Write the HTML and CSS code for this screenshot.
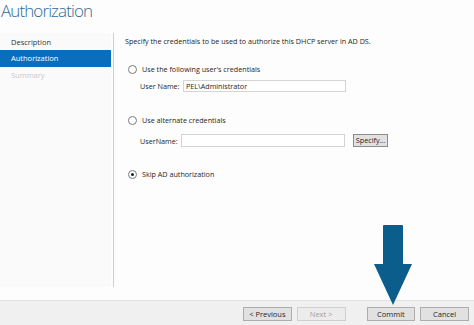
FILE: index.html
```html
<!DOCTYPE html>
<html>
<head>
<meta charset="utf-8">
<link rel="stylesheet" href="styles.css">
</head>
<body>
<div class="window">
  <header class="title">Authorization</header>
  <div class="body">
    <nav class="nav">
      <div class="nav-item">Description</div>
      <div class="nav-item selected">Authorization</div>
      <div class="nav-item disabled">Summary</div>
    </nav>
    <div class="sep"></div>
    <main class="content">
      <p class="intro">Specify the credentials to be used to authorize this DHCP server in AD DS.</p>
      <div class="option opt1">
        <span class="radio"></span><span>Use the following user's credentials</span>
      </div>
      <div class="field f1">
        <span class="flabel">User Name:</span><span class="input">PEL\Administrator</span>
      </div>
      <div class="option opt2">
        <span class="radio"></span><span>Use alternate credentials</span>
      </div>
      <div class="field f2">
        <span class="flabel">UserName:</span><span class="input"></span><span class="specify">Specify...</span>
      </div>
      <div class="option opt3">
        <span class="radio checked"></span><span>Skip AD authorization</span>
      </div>
    </main>
  </div>
  <footer class="footer">
    <span class="btn">&lt; Previous</span>
    <span class="btn disabled">Next &gt;</span>
    <span class="btn commit">Commit</span>
    <span class="btn">Cancel</span>
  </footer>
  <svg class="arrow" width="40" height="82" viewBox="0 0 40 82">
    <path d="M10 1 Q10 0 11 0 L29 0 Q30 0 30 1 L30 39 L39 39 L20 80 L1 39 L10 39 Z" fill="#0b5d8b"/>
  </svg>
</div>
</body>
</html>
```
FILE: styles.css
```css
html, body {
  margin: 0;
  padding: 0;
  background: #fdfdfd;
}
.window {
  position: relative;
  width: 474px;
  height: 325px;
  overflow: hidden;
  font-family: "Open Sans", "Noto Sans", sans-serif;
  font-size: 7.5px;
  color: #1e1e1e;
  display: flex;
  flex-direction: column;
}
.title {
  height: 32px;
  padding-top: 1px;
  padding-left: 1px;
  font-size: 17px;
  font-weight: 300;
  line-height: 20px;
  color: #2f6b98;
  letter-spacing: -0.9px;
}
.body {
  display: flex;
  height: 254px;
}
.nav {
  width: 111px;
  padding-top: 1px;
  background: #fafafa;
}
.nav-item {
  height: 16px;
  line-height: 16px;
  padding-left: 11px;
  color: #333;
}
.nav-item.selected {
  height: 17px;
  line-height: 17px;
  background: #0a6ebd;
  color: #fff;
}
.nav-item.disabled {
  color: #c8c8c8;
}
.sep {
  width: 1px;
  margin-left: 2px;
  background: #cfcfcf;
}
.content {
  flex: 1;
  padding-left: 11px;
  position: relative;
  font-size: 7.2px;
}
.intro {
  margin: 3px 0 0 0;
  line-height: 10px;
}
.option {
  display: flex;
  align-items: center;
  padding-left: 3px;
  height: 10px;
}
.opt1 { margin-top: 18px; }
.opt2 { margin-top: 23px; }
.opt3 { margin-top: 22px; }
.radio {
  width: 7px;
  height: 7px;
  border: 1px solid #7a7a7a;
  border-radius: 50%;
  background: #fff;
  margin-right: 5px;
  box-sizing: content-box;
  position: relative;
}
.radio.checked::after {
  content: "";
  position: absolute;
  left: 2px;
  top: 2px;
  width: 3px;
  height: 3px;
  border-radius: 50%;
  background: #1e1e1e;
}
.field {
  display: flex;
  align-items: center;
  padding-left: 15px;
}
.f1 { margin-top: 6px; height: 12px; }
.f2 { margin-top: 9px; height: 13px; }
.f1 .flabel { width: 43px; }
.f2 .flabel { width: 41px; }
.f1 .input {
  width: 163px;
  height: 12px;
}
.f2 .input {
  width: 164px;
  height: 13px;
}
.input {
  border: 1px solid #d4d4d4;
  background: #fff;
  line-height: 11px;
  padding-left: 2px;
  box-sizing: border-box;
}
.specify {
  margin-left: 8px;
  width: 35px;
  height: 13px;
  line-height: 11px;
  border: 1px solid #8c8c8c;
  background: #e1e1e1;
  box-sizing: border-box;
  text-align: center;
}
.footer {
  margin-top: 13px;
  height: 25px;
  background: #f0f0f0;
  border-top: 1px solid #e2e2e2;
  box-sizing: border-box;
  display: flex;
  align-items: center;
  padding-left: 243px;
  padding-top: 2px;
}
.btn {
  width: 49px;
  height: 14px;
  line-height: 12px;
  border: 1px solid #adadad;
  background: #e1e1e1;
  box-sizing: border-box;
  text-align: center;
  color: #1e1e1e;
  margin-right: 5px;
}
.btn.disabled {
  color: #a0a0a0;
  border-color: #cfcfcf;
  background: #ececec;
  margin-right: 21px;
}
.arrow {
  position: absolute;
  left: 373px;
  top: 225px;
}
```
